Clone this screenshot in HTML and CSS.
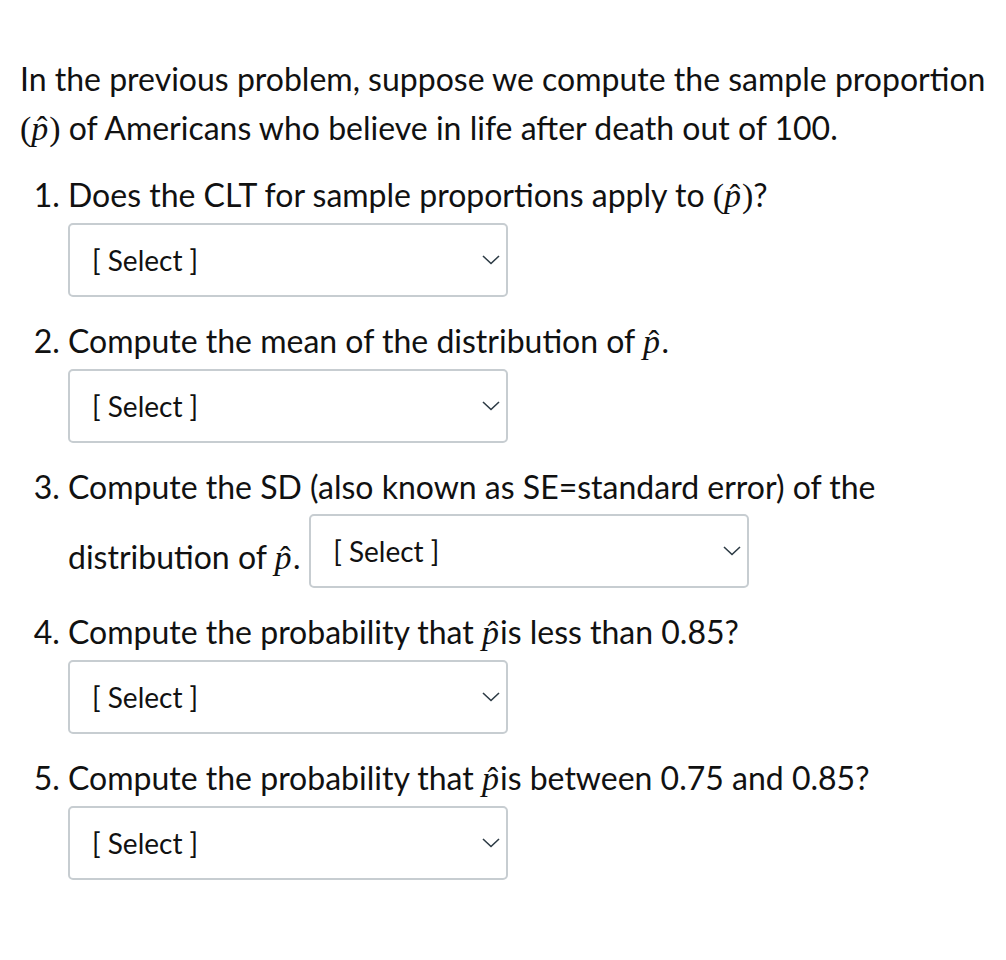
FILE: index.html
```html
<!DOCTYPE html>
<html lang="en">
<head>
<meta charset="utf-8">
<title>Quiz question</title>
<link rel="stylesheet" href="styles.css">
</head>
<body>
<div class="question">
  <p class="intro">In the previous problem, suppose we compute the sample proportion <span class="math">(<span class="phat">p</span>)</span> of Americans who believe in life after death out of 100.</p>
  <ol class="items">
    <li>Does the CLT for sample proportions apply to <span class="math">(<span class="phat">p</span>)</span>? <span class="select"><span class="select-inner"><span class="select-label">[ Select ]</span><svg class="chev" width="18" height="10" viewBox="0 0 18 10"><polyline points="1,1 9,8.5 17,1" fill="none" stroke="#2d3b45" stroke-width="1.6"/></svg></span></span></li>
    <li>Compute the mean of the distribution of <span class="math"><span class="phat">p</span>.</span> <span class="select"><span class="select-inner"><span class="select-label">[ Select ]</span><svg class="chev" width="18" height="10" viewBox="0 0 18 10"><polyline points="1,1 9,8.5 17,1" fill="none" stroke="#2d3b45" stroke-width="1.6"/></svg></span></span></li>
    <li>Compute the SD (also known as SE=standard error) of the distribution of <span class="math"><span class="phat">p</span>.</span> <span class="select"><span class="select-inner"><span class="select-label">[ Select ]</span><svg class="chev" width="18" height="10" viewBox="0 0 18 10"><polyline points="1,1 9,8.5 17,1" fill="none" stroke="#2d3b45" stroke-width="1.6"/></svg></span></span></li>
    <li>Compute the probability that <span class="math"><span class="phat">p</span></span>is less than 0.85? <span class="select"><span class="select-inner"><span class="select-label">[ Select ]</span><svg class="chev" width="18" height="10" viewBox="0 0 18 10"><polyline points="1,1 9,8.5 17,1" fill="none" stroke="#2d3b45" stroke-width="1.6"/></svg></span></span></li>
    <li>Compute the probability that <span class="math"><span class="phat">p</span></span>is between 0.75 and 0.85? <span class="select"><span class="select-inner"><span class="select-label">[ Select ]</span><svg class="chev" width="18" height="10" viewBox="0 0 18 10"><polyline points="1,1 9,8.5 17,1" fill="none" stroke="#2d3b45" stroke-width="1.6"/></svg></span></span></li>
  </ol>
</div>
</body>
</html>
```
FILE: styles.css
```css
html, body {
  margin: 0;
  padding: 0;
  background: #ffffff;
}

body {
  font-family: Lato, "Liberation Sans", sans-serif;
  color: #111111;
}

.question {
  padding: 54px 18px 0 20px;
}

.intro {
  margin: 0 0 21px 0;
  font-size: 32px;
  line-height: 49px;
}

.items {
  margin: 0;
  padding: 0 0 0 48px;
  font-size: 32px;
  line-height: 42px;
}

.math {
  font-family: "Liberation Serif", "DejaVu Serif", serif;
  font-size: 1.06em;
  white-space: nowrap;
}

.phat {
  position: relative;
  display: inline-block;
  font-style: italic;
  padding-right: 1px;
}

.phat::before {
  content: "\02C6";
  position: absolute;
  left: 0.17em;
  top: -0.04em;
  font-style: normal;
  font-size: 0.95em;
}

.select {
  display: inline-block;
  overflow: hidden;
  vertical-align: -42px;
  margin: 6px 0 23px 0;
  width: 440px;
  height: 74px;
  box-sizing: border-box;
  border: 2px solid #c7cdd1;
  border-radius: 5px;
  background: #ffffff;
}

.select-inner {
  display: flex;
  align-items: center;
  justify-content: space-between;
  height: 100%;
  padding: 0 6px 0 22px;
  box-sizing: border-box;
}

.select-label {
  font-family: Lato, "Liberation Sans", sans-serif;
  font-size: 28px;
  line-height: 32px;
  color: #111111;
}

.chev {
  display: block;
}
```
